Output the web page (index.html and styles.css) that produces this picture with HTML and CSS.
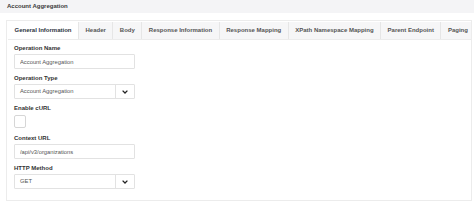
FILE: index.html
```html
<!DOCTYPE html>
<html lang="en">
  <head>
    <meta charset="UTF-8" />
    <title>Account Aggregation</title>
    <link rel="stylesheet" href="styles.css">
  </head>
  <body>
    <div class="title-bar">Account Aggregation</div>

    <div class="panel">
      <ul class="tabs">
        <li class="tab active">General Information</li>
        <li class="tab">Header</li>
        <li class="tab">Body</li>
        <li class="tab">Response Information</li>
        <li class="tab">Response Mapping</li>
        <li class="tab">XPath Namespace Mapping</li>
        <li class="tab">Parent Endpoint</li>
        <li class="tab">Paging</li>
      </ul>

      <form class="tab-content">
        <div class="form-group">
          <label for="opName">Operation Name</label>
          <input type="text" id="opName" value="Account Aggregation" />
        </div>
        <div class="form-group">
          <label for="opType">Operation Type</label>
          <div class="select">
            <span class="select-value">Account Aggregation</span>
            <span class="select-arrow">
              <svg width="6" height="4" viewBox="0 0 6 4"><path d="M0.6 0.6 L3 3 L5.4 0.6" fill="none" stroke="#222" stroke-width="1.3"/></svg>
            </span>
          </div>
        </div>
        <div class="form-group check-group">
          <label for="curl">Enable cURL</label>
          <span class="checkbox" id="curl"></span>
        </div>
        <div class="form-group">
          <label for="ctxUrl">Context URL</label>
          <input type="text" id="ctxUrl" value="/api/v3/organizations" />
        </div>
        <div class="form-group">
          <label for="method">HTTP Method</label>
          <div class="select">
            <span class="select-value">GET</span>
            <span class="select-arrow">
              <svg width="6" height="4" viewBox="0 0 6 4"><path d="M0.6 0.6 L3 3 L5.4 0.6" fill="none" stroke="#222" stroke-width="1.3"/></svg>
            </span>
          </div>
        </div>
      </form>
    </div>
  </body>
</html>
```

FILE: styles.css
```css
body {
  margin: 0;
  font-family: "Liberation Sans", Arial, sans-serif;
  background-color: #fff;
  color: #333;
}

.title-bar {
  height: 13px;
  line-height: 13px;
  padding-left: 7px;
  font-size: 6px;
  font-weight: bold;
  background-color: #f4f4f6;
  color: #3a3a3a;
}

.panel {
  margin: 7px 2px 0 6px;
  height: 179px;
  border: 1px solid #ececec;
  background-color: #fff;
}

.tabs {
  display: flex;
  margin: 1px 0 0 1px;
  padding: 0;
  list-style: none;
  background-color: #f6f6f7;
  border-bottom: 1px solid #ececec;
}

.tab {
  padding: 0 6.5px;
  height: 17px;
  line-height: 17px;
  font-size: 6px;
  font-weight: bold;
  color: #555;
  border-right: 1px solid #e6e6e6;
  white-space: nowrap;
}

.tab.active {
  background-color: #fff;
  color: #2d3440;
  margin-bottom: -1px;
}

.tab-content {
  padding: 4px 7px;
}

.form-group {
  margin-bottom: 5px;
}

label {
  display: block;
  height: 8px;
  line-height: 8px;
  margin-bottom: 2px;
  font-size: 6px;
  font-weight: bold;
  color: #333;
}

input {
  display: block;
  box-sizing: border-box;
  width: 121px;
  height: 15px;
  margin: 0;
  padding: 0 5px;
  border: 1px solid #e2e2e2;
  border-radius: 1px;
  font-family: inherit;
  font-size: 5.8px;
  color: #555;
}

.select {
  display: flex;
  box-sizing: border-box;
  width: 121px;
  height: 15px;
  border: 1px solid #e2e2e2;
  border-radius: 1px;
  font-size: 5.8px;
  color: #555;
}

.select-value {
  flex: 1;
  padding-left: 5px;
  line-height: 13px;
}

.select-arrow {
  width: 18px;
  display: flex;
  align-items: center;
  justify-content: center;
  border-left: 1px solid #e2e2e2;
}

.check-group label {
  margin-bottom: 3px;
}

.check-group {
  margin-bottom: 6px;
}

.checkbox {
  display: block;
  box-sizing: border-box;
  width: 12px;
  height: 13px;
  border: 1px solid #d6d6d6;
  border-radius: 2px;
  background-color: #fff;
}
```
